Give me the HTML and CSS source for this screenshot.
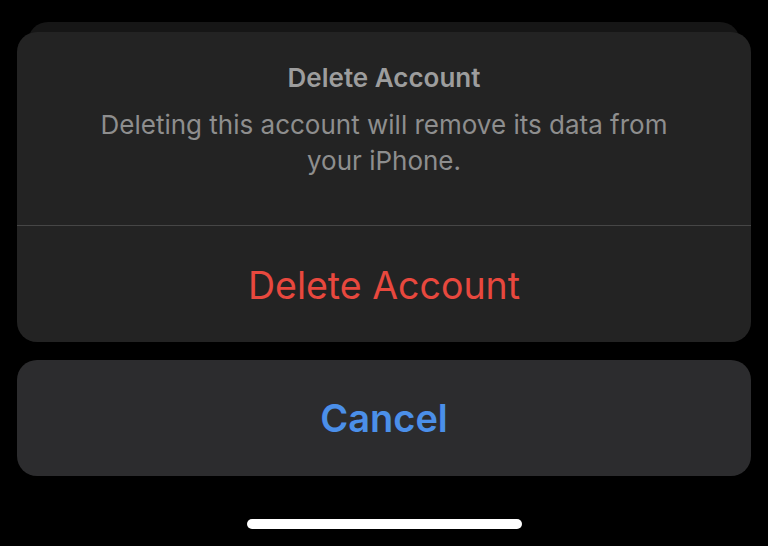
FILE: index.html
```html
<!DOCTYPE html>
<html lang="en">
<head>
  <meta charset="UTF-8" />
  <meta name="viewport" content="width=device-width, initial-scale=1.0" />
  <title>Delete Account</title>
  <link rel="stylesheet" href="styles.css">
</head>
<body>
  <div class="screen">
    <div class="sheet">
      <div class="group">
        <div class="header">
          <div class="title">Delete Account</div>
          <div class="message">Deleting this account will remove its data from your iPhone.</div>
        </div>
        <button class="action destructive">Delete Account</button>
      </div>

      <button class="cancel">Cancel</button>
    </div>

    <div class="home-indicator"></div>
  </div>
</body>
</html>
```

FILE: styles.css
```css
html {
  background: #000;
}
body {
  margin: 0;
  padding: 0;
  font-family: Inter, "Noto Sans", sans-serif;
  -webkit-font-smoothing: antialiased;
}
.screen {
  width: 768px;
  height: 546px;
  display: flex;
  flex-direction: column;
  align-items: center;
  overflow: hidden;
}
.sheet {
  width: 734px;
  margin-top: 32px;
  display: flex;
  flex-direction: column;
  gap: 18px;
}
.group {
  position: relative;
  background: #232323;
  border-radius: 20px;
}
/* the card stacked behind, peeking out over the top */
.group::before {
  content: "";
  position: absolute;
  left: 11px;
  right: 11px;
  top: -10px;
  height: 40px;
  background: #161616;
  border-radius: 20px;
  z-index: -1;
}
.header {
  padding: 30px 40px 46px;
  text-align: center;
  border-bottom: 1px solid #464646;
}
.title {
  font-size: 26px;
  line-height: 32px;
  font-weight: 600;
  color: #9d9d9d;
}
.message {
  margin: 13px auto 0;
  max-width: 590px;
  font-size: 26px;
  line-height: 36px;
  color: #8e8e8e;
}
button {
  display: block;
  width: 100%;
  border: none;
  background: none;
  font-family: inherit;
  cursor: pointer;
  padding: 0;
}
.action {
  height: 116px;
  padding-top: 3px;
  font-size: 37.5px;
  font-weight: 400;
}
.destructive {
  color: #e8483e;
}
.cancel {
  height: 116px;
  background: #2c2c2e;
  border-radius: 20px;
  font-size: 38px;
  font-weight: 600;
  color: #4b8fe9;
}
.home-indicator {
  margin-top: 43px;
  width: 275px;
  height: 10px;
  border-radius: 5px;
  background: #fff;
}
```
